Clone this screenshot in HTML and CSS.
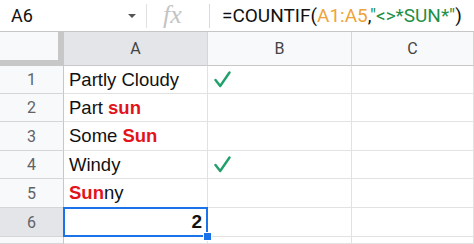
FILE: index.html
```html
<!DOCTYPE html>
<html>
<head>
    <title>COUNTIF sheet</title>
    <link rel="stylesheet" href="styles.css">
</head>
<body>
    <div id="formula-bar">
        <div class="name-box">A6</div>
        <div class="name-arrow"></div>
        <div class="fx">fx</div>
        <div class="formula">=COUNTIF(<span class="ref">A1:A5</span>,<span class="str">"&lt;&gt;*SUN*"</span>)</div>
    </div>
    <div id="sheet">
        <div class="corner"></div>
        <div class="col-head selected">A</div>
        <div class="col-head">B</div>
        <div class="col-head">C</div>

        <div class="row-head">1</div>
        <div class="cell"><span>Partly Cloudy</span></div>
        <div class="cell"><svg class="check" width="17" height="17" viewBox="0 0 17 17"><path d="M1.5 9 L6.2 15 L15.5 1.5" fill="none" stroke="#21a06b" stroke-width="2.4" stroke-linecap="round" stroke-linejoin="round"/></svg></div>
        <div class="cell"></div>

        <div class="row-head">2</div>
        <div class="cell"><span>Part <b class="hit">sun</b></span></div>
        <div class="cell"></div>
        <div class="cell"></div>

        <div class="row-head">3</div>
        <div class="cell"><span>Some <b class="hit">Sun</b></span></div>
        <div class="cell"></div>
        <div class="cell"></div>

        <div class="row-head">4</div>
        <div class="cell"><span>Windy</span></div>
        <div class="cell"><svg class="check" width="17" height="17" viewBox="0 0 17 17"><path d="M1.5 9 L6.2 15 L15.5 1.5" fill="none" stroke="#21a06b" stroke-width="2.4" stroke-linecap="round" stroke-linejoin="round"/></svg></div>
        <div class="cell"></div>

        <div class="row-head">5</div>
        <div class="cell"><span><b class="hit">Sun</b>ny</span></div>
        <div class="cell"></div>
        <div class="cell"></div>

        <div class="row-head selected">6</div>
        <div class="cell active"><span>2</span><span class="handle"></span></div>
        <div class="cell"></div>
        <div class="cell"></div>

        <div class="row-head"></div>
        <div class="cell"></div>
        <div class="cell"></div>
        <div class="cell"></div>
    </div>
</body>
</html>
```
FILE: styles.css
```css
body {
    margin: 0;
    font-family: "Liberation Sans", Arial, sans-serif;
    background-color: #fff;
    overflow: hidden;
}
#formula-bar {
    display: flex;
    align-items: center;
    height: 32px;
    box-sizing: border-box;
    border-bottom: 1px solid #c6c6c6;
}
.name-box {
    width: 117px;
    padding-left: 11px;
    font-family: Roboto, sans-serif;
    font-size: 18px;
    color: #111;
}
.name-arrow {
    width: 0;
    height: 0;
    border-left: 4px solid transparent;
    border-right: 4px solid transparent;
    border-top: 4px solid #555;
    margin-right: 10px;
}
.fx {
    height: 24px;
    width: 64px;
    border-left: 1px solid #e0e0e0;
    border-right: 1px solid #dadada;
    box-sizing: border-box;
    font-family: "Liberation Serif", serif;
    font-style: italic;
    font-size: 26px;
    line-height: 22px;
    color: #c4c4c4;
    padding-left: 16px;
}
.formula {
    padding-left: 12px;
    font-family: Roboto, sans-serif;
    font-size: 19px;
    color: #111;
    white-space: nowrap;
}
.ref {
    color: #eda53a;
}
.str {
    color: #1f8f46;
}
#sheet {
    display: grid;
    grid-template-columns: 64px 144px 144px 1fr;
    grid-template-rows: 34px 28px 28px 29px 28px 29px 29px 7px;
}
#sheet > div {
    box-sizing: border-box;
    border-right: 1px solid #e2e2e2;
    border-bottom: 1px solid #e2e2e2;
}
#sheet > .corner {
    background-color: #f8f9fa;
    border-right: 6px solid #c7c7c7;
    border-bottom: 6px solid #c7c7c7;
}
#sheet > .col-head {
    background-color: #f8f9fa;
    border-bottom: 1px solid #c7c7c7;
    border-right: 1px solid #d6d6d6;
    display: flex;
    align-items: center;
    justify-content: center;
    font-family: Roboto, sans-serif;
    font-size: 16px;
    color: #444;
}
#sheet > .row-head {
    background-color: #f8f9fa;
    border-right: 1px solid #c7c7c7;
    border-bottom: 1px solid #d6d6d6;
    display: flex;
    align-items: center;
    justify-content: center;
    font-family: Roboto, sans-serif;
    font-size: 16px;
    color: #5f6368;
}
#sheet > .selected {
    background-color: #e3e5e8;
}
.cell {
    display: flex;
    align-items: center;
    padding-left: 5px;
    font-size: 18.5px;
    color: #111;
    white-space: nowrap;
}
.hit {
    color: #e3131b;
}
.check {
    margin-left: 1px;
}
.cell.active {
    position: relative;
    justify-content: flex-end;
    padding-right: 5px;
    font-weight: bold;
    font-size: 19px;
}
.cell.active::after {
    content: "";
    position: absolute;
    left: -1px;
    top: -1px;
    right: -1px;
    bottom: -1px;
    border: 2px solid #1a73e8;
}
.handle {
    position: absolute;
    right: -5px;
    bottom: -5px;
    width: 7px;
    height: 7px;
    background-color: #1a73e8;
    border: 1px solid #fff;
    z-index: 2;
}
```
